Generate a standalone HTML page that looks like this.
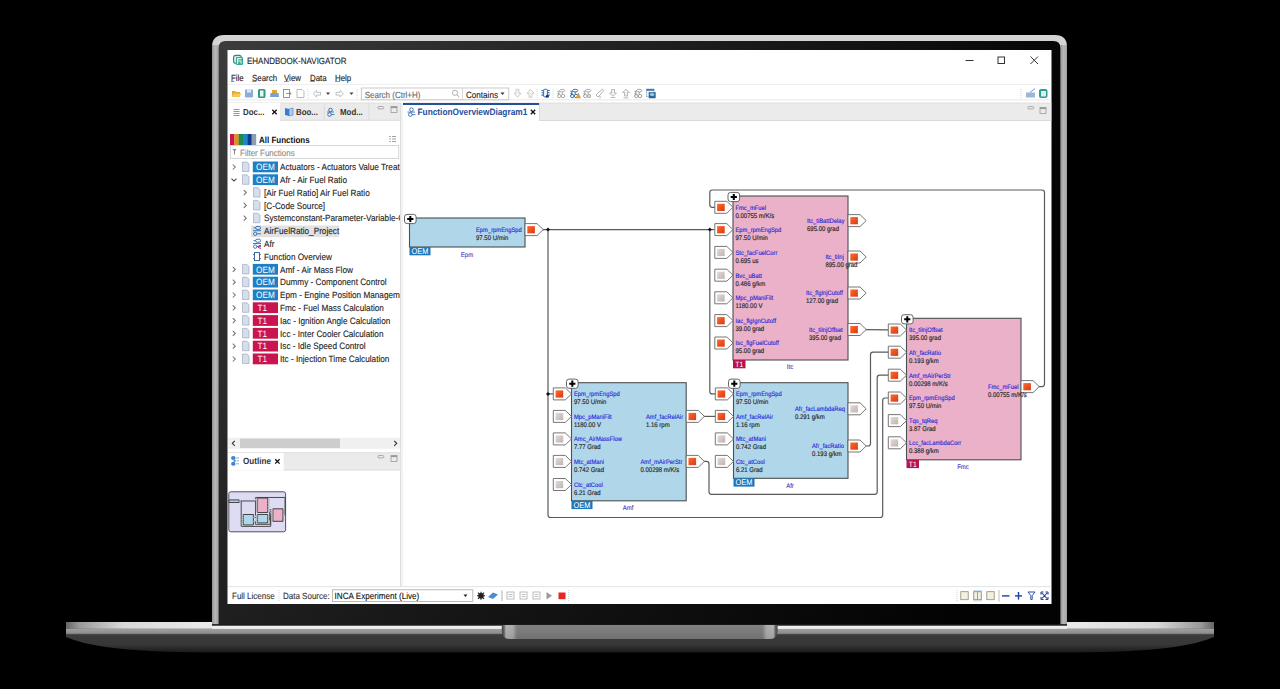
<!DOCTYPE html><html><head><meta charset="utf-8"><title>EHANDBOOK-NAVIGATOR</title><style>html,body{margin:0;padding:0;background:#000;width:1280px;height:689px;overflow:hidden}svg{display:block}text{font-family:"Liberation Sans",sans-serif}</style></head><body>
<svg width="1280" height="689" viewBox="0 0 1280 689" text-rendering="geometricPrecision">
<rect x="0.00" y="0.00" width="1280.00" height="689.00" fill="#000" />
<defs>
<linearGradient id="bez" x1="0" y1="0" x2="1" y2="0.15">
 <stop offset="0" stop-color="#3c3c3c"/><stop offset="0.45" stop-color="#222"/><stop offset="1" stop-color="#050505"/>
</linearGradient>
<linearGradient id="silL" x1="0" y1="0" x2="1" y2="0">
 <stop offset="0" stop-color="#959595"/><stop offset="0.5" stop-color="#b8b8b8"/><stop offset="1" stop-color="#a0a0a0"/>
</linearGradient>
<linearGradient id="silT" x1="0" y1="0" x2="0" y2="1">
 <stop offset="0" stop-color="#d4d4d4"/><stop offset="0.5" stop-color="#bebebe"/><stop offset="1" stop-color="#d8d8d8"/>
</linearGradient>
<linearGradient id="baseTop" x1="0" y1="0" x2="1" y2="0">
 <stop offset="0" stop-color="#666"/><stop offset="0.012" stop-color="#9a9a9a"/><stop offset="0.05" stop-color="#d8d8d8"/><stop offset="0.12" stop-color="#e8e8e8"/><stop offset="0.88" stop-color="#e8e8e8"/><stop offset="0.95" stop-color="#d8d8d8"/><stop offset="0.988" stop-color="#9a9a9a"/><stop offset="1" stop-color="#666"/>
</linearGradient>
<linearGradient id="baseMid" x1="0" y1="0" x2="0" y2="1">
 <stop offset="0" stop-color="#a0a0a0"/><stop offset="1" stop-color="#8a8a8a"/>
</linearGradient>
<linearGradient id="baseBot" x1="0" y1="0" x2="0" y2="1">
 <stop offset="0" stop-color="#444"/><stop offset="0.75" stop-color="#363636"/><stop offset="1" stop-color="#1a1a1a"/>
</linearGradient>
<linearGradient id="notch" x1="0" y1="0" x2="0" y2="1">
 <stop offset="0" stop-color="#8a8a8a"/><stop offset="0.5" stop-color="#7a7a7a"/><stop offset="1" stop-color="#5a5a5a"/>
</linearGradient>
<linearGradient id="bezV" x1="0" y1="0" x2="0" y2="1">
 <stop offset="0" stop-color="#000" stop-opacity="0"/><stop offset="1" stop-color="#000" stop-opacity="0.4"/>
</linearGradient>
<linearGradient id="notchH" x1="0" y1="0" x2="1" y2="0">
 <stop offset="0" stop-color="#2a2a2a"/><stop offset="0.008" stop-color="#555"/><stop offset="0.015" stop-color="#c8c8c8"/><stop offset="0.04" stop-color="#bdbdbd"/><stop offset="0.055" stop-color="#7c7c7c"/>
 <stop offset="0.945" stop-color="#7c7c7c"/><stop offset="0.96" stop-color="#bdbdbd"/><stop offset="0.985" stop-color="#c8c8c8"/><stop offset="0.992" stop-color="#555"/><stop offset="1" stop-color="#2a2a2a"/>
</linearGradient>
<linearGradient id="og" x1="0" y1="0" x2="1" y2="1">
 <stop offset="0" stop-color="#ff6a30"/><stop offset="1" stop-color="#d83a10"/>
</linearGradient>
<linearGradient id="gg" x1="0" y1="0" x2="1" y2="1">
 <stop offset="0" stop-color="#e2dbd8"/><stop offset="1" stop-color="#bfb3ae"/>
</linearGradient>
<clipPath id="treeclip"><rect x="228" y="120" width="172" height="318"/></clipPath>
<clipPath id="screenclip"><rect x="227.5" y="50" width="824" height="554"/></clipPath>
</defs>
<path d="M66,622 L1214,622 L1214,637 C1190,647 1150,652.5 1060,652.5 L220,652.5 C130,652.5 90,647 66,637 Z" fill="url(#baseBot)"/>
<rect x="66.00" y="622.00" width="1148.00" height="6.80" fill="url(#baseTop)" />
<rect x="66.00" y="628.80" width="1148.00" height="5.10" fill="url(#baseMid)" />
<rect x="66.00" y="633.90" width="1148.00" height="0.70" fill="#5a5a5a" opacity="0.6"/>
<path d="M212,624.4 L212,47 Q212,35 224,35 L1055,35 Q1067,35 1067,47 L1067,624.4 Z" fill="url(#silT)"/>
<rect x="212.00" y="45.00" width="6.60" height="579.40" fill="url(#silL)" />
<rect x="1060.40" y="45.00" width="6.60" height="579.40" fill="url(#silL)" />
<path d="M218.6,624.4 L218.6,48 Q218.6,41 225.6,41 L1053.4,41 Q1060.4,41 1060.4,48 L1060.4,624.4 Z" fill="url(#bez)"/>
<rect x="218.60" y="41.00" width="841.80" height="583.40" fill="url(#bezV)" />
<rect x="212.00" y="624.20" width="855.00" height="1.60" fill="#050505" />
<rect x="212.00" y="625.80" width="855.00" height="3.00" fill="#eeeeee" />
<path d="M501.8,625 L777.5,625 L777.5,631 Q777.5,639 769.5,639 L509.8,639 Q501.8,639 501.8,631 Z" fill="url(#notchH)"/>
<path d="M501.8,625 L777.5,625 L777.5,631 Q777.5,639 769.5,639 L509.8,639 Q501.8,639 501.8,631 Z" fill="url(#notch)" opacity="0.35"/>
<rect x="227.50" y="50.00" width="824.00" height="554.00" fill="#ffffff" />
<g clip-path="url(#screenclip)">
<rect x="233.6" y="55.4" width="7.6" height="7.8" rx="2" fill="#cdeee6" stroke="#2a8a78" stroke-width="1.1"/>
<rect x="236" y="57" width="7" height="8" rx="0.8" fill="#3aa890"/><path d="M237.6,64 L237.6,58.6 L241.6,58.6 M237.6,61 L241,61 L241,63.5" stroke="#e4f6f2" stroke-width="1.1" fill="none"/>
<text x="247.00" y="63.71" font-size="8.96" fill="#222" stroke="#222" stroke-width="0.12" stroke-linejoin="round" font-weight="normal" text-anchor="start" textLength="99.57" lengthAdjust="spacingAndGlyphs" >EHANDBOOK-NAVIGATOR</text>
<rect x="965.50" y="60.00" width="8.00" height="1.00" fill="#333" />
<rect x="998" y="57" width="6.5" height="6.5" fill="none" stroke="#333" stroke-width="1"/>
<path d="M1030.5,56.5 L1038,64 M1038,56.5 L1030.5,64" stroke="#333" stroke-width="1"/>
<text x="231.00" y="81.17" font-size="8.85" fill="#222" stroke="#222" stroke-width="0.12" stroke-linejoin="round" font-weight="normal" text-anchor="start" textLength="12.73" lengthAdjust="spacingAndGlyphs" >File</text>
<text x="252.00" y="81.17" font-size="8.85" fill="#222" stroke="#222" stroke-width="0.12" stroke-linejoin="round" font-weight="normal" text-anchor="start" textLength="25.03" lengthAdjust="spacingAndGlyphs" >Search</text>
<text x="284.00" y="81.17" font-size="8.85" fill="#222" stroke="#222" stroke-width="0.12" stroke-linejoin="round" font-weight="normal" text-anchor="start" textLength="16.98" lengthAdjust="spacingAndGlyphs" >View</text>
<text x="310.00" y="81.17" font-size="8.85" fill="#222" stroke="#222" stroke-width="0.12" stroke-linejoin="round" font-weight="normal" text-anchor="start" textLength="16.69" lengthAdjust="spacingAndGlyphs" >Data</text>
<text x="335.00" y="81.17" font-size="8.85" fill="#222" stroke="#222" stroke-width="0.12" stroke-linejoin="round" font-weight="normal" text-anchor="start" textLength="16.25" lengthAdjust="spacingAndGlyphs" >Help</text>
<rect x="231.00" y="81.40" width="3.50" height="0.60" fill="#555" />
<rect x="252.00" y="81.40" width="4.50" height="0.60" fill="#555" />
<rect x="284.00" y="81.40" width="5.00" height="0.60" fill="#555" />
<rect x="310.00" y="81.40" width="5.00" height="0.60" fill="#555" />
<rect x="335.00" y="81.40" width="5.00" height="0.60" fill="#555" />
<rect x="228.00" y="84.00" width="823.50" height="0.80" fill="#ececec" />
<rect x="228.00" y="99.50" width="823.50" height="0.80" fill="#e2e2e2" />
<path d="M232,91 L235,91 L236,92 L240,92 L240,97 L232,97 Z" fill="#e0a830"/><path d="M233,93.5 L241.5,93.5 L239.5,97 L232,97 Z" fill="#f5c85a"/>
<rect x="245" y="89.5" width="8" height="8" fill="#8aaed8" rx="1"/><rect x="247" y="89.5" width="4" height="3" fill="#dfe9f5"/>
<rect x="258" y="89" width="7.5" height="9" fill="#2f9e80" rx="1.5"/><rect x="260" y="90.5" width="3.5" height="6" fill="#e8f5f0"/>
<path d="M270.5,93 L278.5,93 L279,97 L270,97 Z" fill="#7aa0d8"/><rect x="272" y="90" width="5" height="3" fill="#e0a830"/>
<rect x="283.5" y="89.5" width="6" height="8" fill="none" stroke="#888" stroke-width="0.9"/><path d="M286,93.5 L291,93.5 M289.5,92 L291,93.5 L289.5,95" stroke="#888" stroke-width="0.9" fill="none"/>
<path d="M297,89.5 L302,89.5 L304,91.5 L304,97.5 L297,97.5 Z" fill="none" stroke="#aaa" stroke-width="0.8"/>
<path d="M308,89 L308,98" stroke="#ccc" stroke-width="0.8" stroke-dasharray="1,1"/>
<path d="M313,93.7 L316.5,90.5 L316.5,92.3 L320.5,92.3 L320.5,95.1 L316.5,95.1 L316.5,97 Z" fill="none" stroke="#bbb" stroke-width="0.9"/>
<path d="M326,92.5 L330,92.5 L328,95 Z" fill="#444"/>
<path d="M343.5,93.7 L340,90.5 L340,92.3 L336,92.3 L336,95.1 L340,95.1 L340,97 Z" fill="none" stroke="#bbb" stroke-width="0.9"/>
<path d="M349.5,92.5 L353.5,92.5 L351.5,95 Z" fill="#444"/>
<path d="M357,89 L357,98" stroke="#ccc" stroke-width="0.8" stroke-dasharray="1,1"/>
<rect x="361.3" y="88" width="147.5" height="11.8" fill="#fff" stroke="#bdbdbd" stroke-width="0.8"/>
<rect x="462.20" y="88.30" width="0.70" height="11.30" fill="#c8c8c8" />
<text x="364.70" y="98.01" font-size="8.96" fill="#666" stroke="#666" stroke-width="0.12" stroke-linejoin="round" font-weight="normal" text-anchor="start" textLength="55.79" lengthAdjust="spacingAndGlyphs" >Search (Ctrl+H)</text>
<circle cx="455" cy="92.8" r="2.6" fill="none" stroke="#aaa" stroke-width="0.9"/><path d="M457,94.8 L459.5,97.3" stroke="#aaa" stroke-width="1"/>
<text x="466.00" y="98.05" font-size="9.07" fill="#222" stroke="#222" stroke-width="0.12" stroke-linejoin="round" font-weight="normal" text-anchor="start" textLength="31.97" lengthAdjust="spacingAndGlyphs" >Contains</text>
<path d="M500.5,92.5 L504.5,92.5 L502.5,95 Z" fill="#333"/>
<path d="M516,89.3 L519,89.3 L519,93.3 L521,93.3 L517.5,97.3 L514,93.3 L516,93.3 Z" fill="#f6f6f2" stroke="#c4c4c4" stroke-width="0.8"/>
<path d="M529,97.3 L532,97.3 L532,93.3 L534,93.3 L530.5,89.3 L527,93.3 L529,93.3 Z" fill="#f6f6f2" stroke="#c4c4c4" stroke-width="0.8"/>
<path d="M537,89 L537,98" stroke="#ccc" stroke-width="0.8" stroke-dasharray="1,1"/>
<path d="M541.5,90.5 L543.5,90.5 M541.5,92.8 L543.5,92.8 M541.5,95.1 L543.5,95.1 M547.3,90.5 L549.7,90.5 M547.3,92.8 L549.7,92.8 M547.3,95.1 L549.7,95.1" stroke="#2a64a8" stroke-width="1.1"/>
<rect x="543.6" y="89.3" width="3.8" height="7.6" rx="1" fill="#f4f8fc" stroke="#2a5a9a" stroke-width="0.9"/><circle cx="547.3" cy="96.3" r="1.5" fill="#0d3a80"/>
<path d="M553,89 L553,98" stroke="#ccc" stroke-width="0.8" stroke-dasharray="1,1"/>
<ellipse cx="562.2" cy="90.6" rx="2.7" ry="1.3" fill="none" stroke="#a0a0a0" stroke-width="0.9"/>
<path d="M557.4,91.3 L559.7,91.3 M557.4,93.4 L559.4,93.4 M558.8,91.3 L558.8,95.5" stroke="#a0a0a0" stroke-width="0.9" fill="none"/>
<circle cx="559.2" cy="96" r="1.7" fill="none" stroke="#a0a0a0" stroke-width="0.9"/><circle cx="563.0" cy="96" r="1.7" fill="none" stroke="#a0a0a0" stroke-width="0.9"/><path d="M562.2,92 L562.2,94.2" stroke="#a0a0a0" stroke-width="0.9"/>
<ellipse cx="575.2" cy="90.6" rx="2.7" ry="1.3" fill="none" stroke="#2a64a8" stroke-width="0.9"/>
<path d="M570.4,91.3 L572.7,91.3 M570.4,93.4 L572.4,93.4 M571.8,91.3 L571.8,95.5" stroke="#2a64a8" stroke-width="0.9" fill="none"/>
<circle cx="572.2" cy="96" r="1.7" fill="none" stroke="#2a64a8" stroke-width="0.9"/><circle cx="576.0" cy="96" r="1.7" fill="none" stroke="#2a64a8" stroke-width="0.9"/><path d="M575.2,92 L575.2,94.2" stroke="#2a64a8" stroke-width="0.9"/>
<path d="M576,98 L578.3,93 L580.6,98 Z" fill="#f0a020" stroke="#d88a10" stroke-width="0.5"/>
<ellipse cx="588.2" cy="90.6" rx="2.7" ry="1.3" fill="none" stroke="#a0a0a0" stroke-width="0.9"/>
<path d="M583.4,91.3 L585.7,91.3 M583.4,93.4 L585.4,93.4 M584.8,91.3 L584.8,95.5" stroke="#a0a0a0" stroke-width="0.9" fill="none"/>
<circle cx="585.2" cy="96" r="1.7" fill="none" stroke="#a0a0a0" stroke-width="0.9"/><circle cx="589.0" cy="96" r="1.7" fill="none" stroke="#a0a0a0" stroke-width="0.9"/><path d="M588.2,92 L588.2,94.2" stroke="#a0a0a0" stroke-width="0.9"/>
<circle cx="588.8" cy="96" r="2" fill="#bbb" opacity="0.6"/>
<path d="M596,95 L599,92 L602.5,89.2 L603.8,90.5 L601,94 L598,97 Z" fill="none" stroke="#aaa" stroke-width="0.9"/><path d="M600,96 L600,98.3" stroke="#aaa" stroke-width="0.9"/>
<path d="M611.5,89.5 L614.5,89.5 L614.5,93 L616.5,93 L613,96.2 L609.5,93 L611.5,93 Z" fill="#f4f2ea" stroke="#aaa" stroke-width="0.8"/><path d="M610.5,97.5 L615.5,97.5" stroke="#aaa" stroke-width="0.8"/>
<path d="M624.5,96 L627.5,96 L627.5,92.5 L629.5,92.5 L626,89.3 L622.5,92.5 L624.5,92.5 Z" fill="#f4f2ea" stroke="#aaa" stroke-width="0.8"/><path d="M623.5,97.8 L628.5,97.8" stroke="#aaa" stroke-width="0.8"/>
<ellipse cx="639.2" cy="90.6" rx="2.7" ry="1.3" fill="none" stroke="#959595" stroke-width="0.9"/>
<path d="M634.4,91.3 L636.7,91.3 M634.4,93.4 L636.4,93.4 M635.8,91.3 L635.8,95.5" stroke="#959595" stroke-width="0.9" fill="none"/>
<circle cx="636.2" cy="96" r="1.7" fill="none" stroke="#959595" stroke-width="0.9"/><circle cx="640.0" cy="96" r="1.7" fill="none" stroke="#959595" stroke-width="0.9"/><path d="M639.2,92 L639.2,94.2" stroke="#959595" stroke-width="0.9"/>
<rect x="646.3" y="89" width="7.8" height="7.5" fill="#eef2f4" stroke="#8aa0b0" stroke-width="0.6"/><rect x="646.3" y="89" width="7.8" height="1.8" fill="#3a78c8"/>
<rect x="649" y="92.5" width="6.3" height="5.5" fill="#2a6a9a" stroke="#3a5a7a" stroke-width="0.5"/><ellipse cx="652.1" cy="94.6" rx="2.2" ry="1.5" fill="#8fd0f0"/>
<path d="M1021,89 L1021,98" stroke="#ccc" stroke-width="0.8" stroke-dasharray="1,1"/>
<rect x="1026" y="92.5" width="9" height="5" fill="#9ab8d8"/><path d="M1030,92.5 L1035,88.5" stroke="#6a8ab0" stroke-width="0.9"/>
<rect x="1039" y="89" width="8.5" height="9" rx="2" fill="#2f9e90"/><rect x="1041" y="91" width="5" height="5.5" fill="#d8f0ec"/>
<rect x="228.00" y="103.00" width="172.50" height="17.50" fill="#ebebeb" />
<rect x="228.00" y="102.60" width="172.50" height="0.80" fill="#dadada" />
<rect x="228.00" y="119.80" width="172.50" height="0.80" fill="#d6d6d6" />
<rect x="228.00" y="103.00" width="52.00" height="18.00" fill="#ffffff" />
<rect x="323.80" y="103.50" width="0.80" height="16.50" fill="#d8d8d8" />
<rect x="368.60" y="103.50" width="0.80" height="16.50" fill="#d8d8d8" />
<rect x="400.20" y="103.00" width="0.80" height="483.50" fill="#d8d8d8" />
<rect x="401.00" y="103.00" width="2.00" height="483.50" fill="#f2f2f2" />
<path d="M233.5,109.5 L239.5,109.5 M233.5,111.5 L239.5,111.5 M233.5,113.5 L239.5,113.5 M233.5,115.5 L239.5,115.5" stroke="#6a7a90" stroke-width="0.8"/>
<text x="243.00" y="115.17" font-size="8.85" fill="#333" font-weight="bold" text-anchor="start" textLength="21.51" lengthAdjust="spacingAndGlyphs" >Doc...</text>
<path d="M272.3,109.8 L276.7,114.2 M276.7,109.8 L272.3,114.2" stroke="#111" stroke-width="1.3"/>
<path d="M285,108 L289,109 L289,116 L285,115 Z" fill="#3a7ad0"/><path d="M289,109 L293,108 L293,115 L289,116 Z" fill="#aecdf0" stroke="#3a7ad0" stroke-width="0.6"/>
<text x="296.00" y="115.17" font-size="8.85" fill="#333" font-weight="bold" text-anchor="start" textLength="21.94" lengthAdjust="spacingAndGlyphs" >Boo...</text>
<circle cx="330.5" cy="110" r="1.8" fill="none" stroke="#2a6ab0" stroke-width="0.9"/><circle cx="329.5" cy="114.5" r="1.8" fill="none" stroke="#2a6ab0" stroke-width="0.9"/><path d="M327,112 L334,112 M331,114.5 L334.5,114.5" stroke="#2a6ab0" stroke-width="0.8"/>
<text x="340.00" y="115.17" font-size="8.85" fill="#333" font-weight="bold" text-anchor="start" textLength="22.82" lengthAdjust="spacingAndGlyphs" >Mod...</text>
<rect x="377.8" y="106.5" width="6" height="2.4" rx="1.2" fill="none" stroke="#999" stroke-width="0.8"/>
<rect x="391" y="106.5" width="6" height="6" fill="none" stroke="#999" stroke-width="0.8"/><rect x="391" y="106.5" width="6" height="1.6" fill="#999"/>
<rect x="230.00" y="134.00" width="4.53" height="11.00" fill="#c8174f" />
<rect x="234.33" y="134.00" width="4.53" height="11.00" fill="#e0901c" />
<rect x="238.67" y="134.00" width="4.53" height="11.00" fill="#1f8a4c" />
<rect x="243.00" y="134.00" width="4.53" height="11.00" fill="#1d86c8" />
<rect x="247.33" y="134.00" width="4.53" height="11.00" fill="#0d3c8a" />
<rect x="251.67" y="134.00" width="4.53" height="11.00" fill="#8e9bb0" />
<text x="259.00" y="143.21" font-size="8.96" fill="#111" font-weight="bold" text-anchor="start" textLength="50.66" lengthAdjust="spacingAndGlyphs" >All Functions</text>
<path d="M389.5,136.5 L390.5,136.5 M389.5,139 L390.5,139 M389.5,141.5 L390.5,141.5" stroke="#2a6ab0" stroke-width="1"/><path d="M392,136.5 L396,136.5 M392,139 L396,139 M392,141.5 L396,141.5" stroke="#888" stroke-width="0.8"/>
<rect x="230.3" y="145.7" width="168.5" height="12.6" fill="#fff" stroke="#c4c4c4" stroke-width="0.7"/>
<path d="M232.5,149 L236.5,149 L235,151 L235,154.5 L234,154.5 L234,151 Z" fill="#888"/>
<text x="240.00" y="155.81" font-size="8.96" fill="#8a8a8a" stroke="#8a8a8a" stroke-width="0.12" stroke-linejoin="round" font-weight="normal" text-anchor="start" textLength="54.68" lengthAdjust="spacingAndGlyphs" >Filter Functions</text>
<g clip-path="url(#treeclip)">
<path d="M232.8,164.5 L235.3,167.0 L232.8,169.5" stroke="#707070" stroke-width="1.05" fill="none"/>
<path d="M242.5,162.0 L247,162.0 L249,164.0 L249,171.5 L242.5,171.5 Z" fill="#d6deec" stroke="#9eaac2" stroke-width="0.7"/>
<rect x="252.80" y="161.50" width="25.20" height="10.80" fill="#1f7fc4" />
<text x="265.40" y="170.29" font-size="9.18" fill="#fff" font-weight="normal" text-anchor="middle" textLength="18.68" lengthAdjust="spacingAndGlyphs" >OEM</text>
<text x="280.00" y="170.29" font-size="9.18" fill="#222" stroke="#222" stroke-width="0.12" stroke-linejoin="round" font-weight="normal" text-anchor="start" textLength="119.72" lengthAdjust="spacingAndGlyphs" >Actuators - Actuators Value Treat</text>
<path d="M231.5,178.60000000000002 L234,181.10000000000002 L236.5,178.60000000000002" stroke="#444" stroke-width="1.05" fill="none"/>
<path d="M242.5,174.8 L247,174.8 L249,176.8 L249,184.3 L242.5,184.3 Z" fill="#d6deec" stroke="#9eaac2" stroke-width="0.7"/>
<rect x="252.80" y="174.30" width="25.20" height="10.80" fill="#1f7fc4" />
<text x="265.40" y="183.09" font-size="9.18" fill="#fff" font-weight="normal" text-anchor="middle" textLength="18.68" lengthAdjust="spacingAndGlyphs" >OEM</text>
<text x="280.00" y="183.09" font-size="9.18" fill="#222" stroke="#222" stroke-width="0.12" stroke-linejoin="round" font-weight="normal" text-anchor="start" textLength="66.99" lengthAdjust="spacingAndGlyphs" >Afr - Air Fuel Ratio</text>
<path d="M243.8,190.1 L246.3,192.6 L243.8,195.1" stroke="#707070" stroke-width="1.05" fill="none"/>
<path d="M253.5,187.6 L258,187.6 L260,189.6 L260,197.1 L253.5,197.1 Z" fill="#d6deec" stroke="#9eaac2" stroke-width="0.7"/>
<text x="264.00" y="195.89" font-size="9.18" fill="#222" stroke="#222" stroke-width="0.12" stroke-linejoin="round" font-weight="normal" text-anchor="start" textLength="105.73" lengthAdjust="spacingAndGlyphs" >[Air Fuel Ratio] Air Fuel Ratio</text>
<path d="M243.8,202.9 L246.3,205.4 L243.8,207.9" stroke="#707070" stroke-width="1.05" fill="none"/>
<path d="M253.5,200.4 L258,200.4 L260,202.4 L260,209.9 L253.5,209.9 Z" fill="#d6deec" stroke="#9eaac2" stroke-width="0.7"/>
<text x="264.00" y="208.69" font-size="9.18" fill="#222" stroke="#222" stroke-width="0.12" stroke-linejoin="round" font-weight="normal" text-anchor="start" textLength="61.07" lengthAdjust="spacingAndGlyphs" >[C-Code Source]</text>
<path d="M243.8,215.7 L246.3,218.2 L243.8,220.7" stroke="#707070" stroke-width="1.05" fill="none"/>
<path d="M253.5,213.2 L258,213.2 L260,215.2 L260,222.7 L253.5,222.7 Z" fill="#d6deec" stroke="#9eaac2" stroke-width="0.7"/>
<text x="264.00" y="221.49" font-size="9.18" fill="#222" stroke="#222" stroke-width="0.12" stroke-linejoin="round" font-weight="normal" text-anchor="start" textLength="140.21" lengthAdjust="spacingAndGlyphs" >Systemconstant-Parameter-Variable-C</text>
<rect x="251.00" y="225.50" width="88.00" height="11.70" fill="#e2e2e2" />
<rect x="255.6" y="226.4" width="5" height="3" rx="1.5" fill="none" stroke="#2a6ab0" stroke-width="0.9"/><circle cx="255.2" cy="233.8" r="1.7" fill="none" stroke="#2a6ab0" stroke-width="0.9"/><path d="M253,230.7 L261,230.7 M253.4,227.9 L255.6,227.9 M256.9,233.8 L261,233.8" stroke="#2a6ab0" stroke-width="0.9"/>
<text x="264.00" y="234.29" font-size="9.18" fill="#222" stroke="#222" stroke-width="0.12" stroke-linejoin="round" font-weight="normal" text-anchor="start" textLength="75.20" lengthAdjust="spacingAndGlyphs" >AirFuelRatio_Project</text>
<rect x="255.6" y="239.20000000000002" width="5" height="3" rx="1.5" fill="none" stroke="#2a6ab0" stroke-width="0.9"/><circle cx="255.2" cy="246.60000000000002" r="1.7" fill="none" stroke="#2a6ab0" stroke-width="0.9"/><path d="M253,243.5 L261,243.5 M253.4,240.70000000000002 L255.6,240.70000000000002 M256.9,246.60000000000002 L261,246.60000000000002" stroke="#2a6ab0" stroke-width="0.9"/>
<path d="M261,245.3 Q258,245.3 258,246.8 Q258,248.3 261,248.3" stroke="#d02040" stroke-width="1" fill="none"/>
<text x="264.00" y="247.09" font-size="9.18" fill="#222" stroke="#222" stroke-width="0.12" stroke-linejoin="round" font-weight="normal" text-anchor="start" textLength="10.48" lengthAdjust="spacingAndGlyphs" >Afr</text>
<rect x="254.5" y="252.60000000000002" width="5" height="8" fill="none" stroke="#2a5a90" stroke-width="0.9"/><path d="M253,254.60000000000002 L254.5,254.60000000000002 M253,258.6 L254.5,258.6 M259.5,254.60000000000002 L261,254.60000000000002 M259.5,258.6 L261,258.6" stroke="#2a5a90" stroke-width="0.8"/>
<text x="264.00" y="259.89" font-size="9.18" fill="#222" stroke="#222" stroke-width="0.12" stroke-linejoin="round" font-weight="normal" text-anchor="start" textLength="67.90" lengthAdjust="spacingAndGlyphs" >Function Overview</text>
<path d="M232.8,266.9 L235.3,269.4 L232.8,271.9" stroke="#707070" stroke-width="1.05" fill="none"/>
<path d="M242.5,264.4 L247,264.4 L249,266.4 L249,273.9 L242.5,273.9 Z" fill="#d6deec" stroke="#9eaac2" stroke-width="0.7"/>
<rect x="252.80" y="263.90" width="25.20" height="10.80" fill="#1f7fc4" />
<text x="265.40" y="272.69" font-size="9.18" fill="#fff" font-weight="normal" text-anchor="middle" textLength="18.68" lengthAdjust="spacingAndGlyphs" >OEM</text>
<text x="280.00" y="272.69" font-size="9.18" fill="#222" stroke="#222" stroke-width="0.12" stroke-linejoin="round" font-weight="normal" text-anchor="start" textLength="72.90" lengthAdjust="spacingAndGlyphs" >Amf - Air Mass Flow</text>
<path d="M232.8,279.7 L235.3,282.2 L232.8,284.7" stroke="#707070" stroke-width="1.05" fill="none"/>
<path d="M242.5,277.2 L247,277.2 L249,279.2 L249,286.7 L242.5,286.7 Z" fill="#d6deec" stroke="#9eaac2" stroke-width="0.7"/>
<rect x="252.80" y="276.70" width="25.20" height="10.80" fill="#1f7fc4" />
<text x="265.40" y="285.49" font-size="9.18" fill="#fff" font-weight="normal" text-anchor="middle" textLength="18.68" lengthAdjust="spacingAndGlyphs" >OEM</text>
<text x="280.00" y="285.49" font-size="9.18" fill="#222" stroke="#222" stroke-width="0.12" stroke-linejoin="round" font-weight="normal" text-anchor="start" textLength="106.64" lengthAdjust="spacingAndGlyphs" >Dummy - Component Control</text>
<path d="M232.8,292.5 L235.3,295.0 L232.8,297.5" stroke="#707070" stroke-width="1.05" fill="none"/>
<path d="M242.5,290.0 L247,290.0 L249,292.0 L249,299.5 L242.5,299.5 Z" fill="#d6deec" stroke="#9eaac2" stroke-width="0.7"/>
<rect x="252.80" y="289.50" width="25.20" height="10.80" fill="#1f7fc4" />
<text x="265.40" y="298.29" font-size="9.18" fill="#fff" font-weight="normal" text-anchor="middle" textLength="18.68" lengthAdjust="spacingAndGlyphs" >OEM</text>
<text x="280.00" y="298.29" font-size="9.18" fill="#222" stroke="#222" stroke-width="0.12" stroke-linejoin="round" font-weight="normal" text-anchor="start" textLength="131.27" lengthAdjust="spacingAndGlyphs" >Epm - Engine Position Management</text>
<path d="M232.8,305.3 L235.3,307.8 L232.8,310.3" stroke="#707070" stroke-width="1.05" fill="none"/>
<path d="M242.5,302.8 L247,302.8 L249,304.8 L249,312.3 L242.5,312.3 Z" fill="#d6deec" stroke="#9eaac2" stroke-width="0.7"/>
<rect x="252.80" y="302.30" width="25.20" height="10.80" fill="#c8144f" />
<text x="257.50" y="311.09" font-size="9.18" fill="#fff" font-weight="normal" text-anchor="start" textLength="9.57" lengthAdjust="spacingAndGlyphs" >T1</text>
<text x="280.00" y="311.09" font-size="9.18" fill="#222" stroke="#222" stroke-width="0.12" stroke-linejoin="round" font-weight="normal" text-anchor="start" textLength="103.89" lengthAdjust="spacingAndGlyphs" >Fmc - Fuel Mass Calculation</text>
<path d="M232.8,318.1 L235.3,320.6 L232.8,323.1" stroke="#707070" stroke-width="1.05" fill="none"/>
<path d="M242.5,315.6 L247,315.6 L249,317.6 L249,325.1 L242.5,325.1 Z" fill="#d6deec" stroke="#9eaac2" stroke-width="0.7"/>
<rect x="252.80" y="315.10" width="25.20" height="10.80" fill="#c8144f" />
<text x="257.50" y="323.89" font-size="9.18" fill="#fff" font-weight="normal" text-anchor="start" textLength="9.57" lengthAdjust="spacingAndGlyphs" >T1</text>
<text x="280.00" y="323.89" font-size="9.18" fill="#222" stroke="#222" stroke-width="0.12" stroke-linejoin="round" font-weight="normal" text-anchor="start" textLength="110.31" lengthAdjust="spacingAndGlyphs" >Iac - Ignition Angle Calculation</text>
<path d="M232.8,330.9 L235.3,333.4 L232.8,335.9" stroke="#707070" stroke-width="1.05" fill="none"/>
<path d="M242.5,328.4 L247,328.4 L249,330.4 L249,337.9 L242.5,337.9 Z" fill="#d6deec" stroke="#9eaac2" stroke-width="0.7"/>
<rect x="252.80" y="327.90" width="25.20" height="10.80" fill="#c8144f" />
<text x="257.50" y="336.69" font-size="9.18" fill="#fff" font-weight="normal" text-anchor="start" textLength="9.57" lengthAdjust="spacingAndGlyphs" >T1</text>
<text x="280.00" y="336.69" font-size="9.18" fill="#222" stroke="#222" stroke-width="0.12" stroke-linejoin="round" font-weight="normal" text-anchor="start" textLength="103.45" lengthAdjust="spacingAndGlyphs" >Icc - Inter Cooler Calculation</text>
<path d="M232.8,343.70000000000005 L235.3,346.20000000000005 L232.8,348.70000000000005" stroke="#707070" stroke-width="1.05" fill="none"/>
<path d="M242.5,341.20000000000005 L247,341.20000000000005 L249,343.20000000000005 L249,350.70000000000005 L242.5,350.70000000000005 Z" fill="#d6deec" stroke="#9eaac2" stroke-width="0.7"/>
<rect x="252.80" y="340.70" width="25.20" height="10.80" fill="#c8144f" />
<text x="257.50" y="349.49" font-size="9.18" fill="#fff" font-weight="normal" text-anchor="start" textLength="9.57" lengthAdjust="spacingAndGlyphs" >T1</text>
<text x="280.00" y="349.49" font-size="9.18" fill="#222" stroke="#222" stroke-width="0.12" stroke-linejoin="round" font-weight="normal" text-anchor="start" textLength="85.69" lengthAdjust="spacingAndGlyphs" >Isc - Idle Speed Control</text>
<path d="M232.8,356.5 L235.3,359.0 L232.8,361.5" stroke="#707070" stroke-width="1.05" fill="none"/>
<path d="M242.5,354.0 L247,354.0 L249,356.0 L249,363.5 L242.5,363.5 Z" fill="#d6deec" stroke="#9eaac2" stroke-width="0.7"/>
<rect x="252.80" y="353.50" width="25.20" height="10.80" fill="#c8144f" />
<text x="257.50" y="362.29" font-size="9.18" fill="#fff" font-weight="normal" text-anchor="start" textLength="9.57" lengthAdjust="spacingAndGlyphs" >T1</text>
<text x="280.00" y="362.29" font-size="9.18" fill="#222" stroke="#222" stroke-width="0.12" stroke-linejoin="round" font-weight="normal" text-anchor="start" textLength="109.38" lengthAdjust="spacingAndGlyphs" >Itc - Injection Time Calculation</text>
</g>
<rect x="228.00" y="437.80" width="172.00" height="11.00" fill="#f0f0f0" />
<rect x="240.00" y="438.60" width="100.00" height="9.40" fill="#cdcdcd" />
<path d="M234.8,440.8 L232.3,443.3 L234.8,445.8" stroke="#333" stroke-width="1.1" fill="none"/>
<path d="M394.2,440.8 L396.7,443.3 L394.2,445.8" stroke="#333" stroke-width="1.1" fill="none"/>
<rect x="228.00" y="452.60" width="172.20" height="17.60" fill="#ebebeb" />
<rect x="228.00" y="452.40" width="172.20" height="0.80" fill="#dadada" />
<rect x="228.00" y="469.60" width="172.20" height="0.80" fill="#d6d6d6" />
<rect x="228.00" y="453.00" width="55.70" height="17.60" fill="#ffffff" />
<rect x="231.6" y="456.5" width="3.4" height="3" rx="0.8" fill="#3a8ad8" stroke="#1a6ab8" stroke-width="0.5"/><rect x="231.6" y="462.3" width="3.4" height="3" rx="0.8" fill="#3a8ad8" stroke="#1a6ab8" stroke-width="0.5"/><rect x="233.6" y="459.8" width="2" height="2" fill="#4a8ac8"/>
<path d="M236,458 L239,458 M236.5,460.8 L239,460.8 M236,463.8 L239,463.8" stroke="#7aa0c8" stroke-width="0.8"/>
<text x="243.00" y="463.85" font-size="9.07" fill="#333" font-weight="bold" text-anchor="start" textLength="27.90" lengthAdjust="spacingAndGlyphs" >Outline</text>
<path d="M275.2,459.2 L279.6,463.6 M279.6,459.2 L275.2,463.6" stroke="#111" stroke-width="1.3"/>
<rect x="377.8" y="455.5" width="6" height="2.4" rx="1.2" fill="none" stroke="#999" stroke-width="0.8"/>
<rect x="391" y="455.5" width="6" height="6" fill="none" stroke="#999" stroke-width="0.8"/><rect x="391" y="455.5" width="6" height="1.6" fill="#999"/>
<rect x="228.8" y="491.8" width="56.8" height="40" rx="2" fill="#dddcf2" stroke="#505060" stroke-width="1"/>
<g transform="translate(192.8,480.7) scale(0.0883)">
<path d="M542,229.6 L714.5,229.6" fill="none" stroke="#3a3a3a" stroke-width="0.9" vector-effect="non-scaling-stroke"/>
<path d="M548,229.6 L548,515 Q548,517.5 550.5,517.5 L880,517.5 Q882.7,517.5 882.7,515 L882.7,400.5 Q882.7,398 885,398 L888.5,398" fill="none" stroke="#3a3a3a" stroke-width="0.9" vector-effect="non-scaling-stroke"/>
<path d="M548,393.9 L553.5,393.9" fill="none" stroke="#3a3a3a" stroke-width="0.9" vector-effect="non-scaling-stroke"/>
<path d="M709.8,229.6 L709.8,391.4 Q709.8,393.9 712.3,393.9 L715.5,393.9" fill="none" stroke="#3a3a3a" stroke-width="0.9" vector-effect="non-scaling-stroke"/>
<path d="M703,416.4 L715.5,416.4" fill="none" stroke="#3a3a3a" stroke-width="0.9" vector-effect="non-scaling-stroke"/>
<path d="M703,461.4 L706.5,461.4 Q709,461.4 709,464 L709,491.8 Q709,494.3 711.5,494.3 L874.7,494.3 Q877.2,494.3 877.2,491.8 L877.2,377.7 Q877.2,375.2 879.7,375.2 L888.5,375.2" fill="none" stroke="#3a3a3a" stroke-width="0.9" vector-effect="non-scaling-stroke"/>
<path d="M866,446 L868,446 Q870.5,446 870.5,443.5 L870.5,354.7 Q870.5,352.2 873,352.2 L888.5,352.2" fill="none" stroke="#3a3a3a" stroke-width="0.9" vector-effect="non-scaling-stroke"/>
<path d="M866,329.7 L888.5,329.8" fill="none" stroke="#3a3a3a" stroke-width="0.9" vector-effect="non-scaling-stroke"/>
<path d="M1039,386.6 L1042,386.6 Q1044.5,386.6 1044.5,384.1 L1044.5,192.5 Q1044.5,190 1042,190 L712.3,190 Q709.8,190 709.8,192.5 L709.8,204.8 Q709.8,207.3 712.3,207.3 L715,207.3" fill="none" stroke="#3a3a3a" stroke-width="0.9" vector-effect="non-scaling-stroke"/>
<rect x="409.5" y="218" width="115.5" height="29" fill="#b0d6ea" stroke="#333" stroke-width="0.9" vector-effect="non-scaling-stroke"/>
<rect x="525" y="223.6" width="18" height="12" fill="#fff" stroke="#777" stroke-width="0.4" vector-effect="non-scaling-stroke"/>
<rect x="733" y="196" width="115" height="164" fill="#eab1c8" stroke="#333" stroke-width="0.9" vector-effect="non-scaling-stroke"/>
<rect x="715" y="201.3" width="18" height="12" fill="#fff" stroke="#777" stroke-width="0.4" vector-effect="non-scaling-stroke"/>
<rect x="715" y="223.6" width="18" height="12" fill="#fff" stroke="#777" stroke-width="0.4" vector-effect="non-scaling-stroke"/>
<rect x="715" y="246.4" width="18" height="12" fill="#fff" stroke="#777" stroke-width="0.4" vector-effect="non-scaling-stroke"/>
<rect x="715" y="269.2" width="18" height="12" fill="#fff" stroke="#777" stroke-width="0.4" vector-effect="non-scaling-stroke"/>
<rect x="715" y="291.8" width="18" height="12" fill="#fff" stroke="#777" stroke-width="0.4" vector-effect="non-scaling-stroke"/>
<rect x="715" y="314.6" width="18" height="12" fill="#fff" stroke="#777" stroke-width="0.4" vector-effect="non-scaling-stroke"/>
<rect x="715" y="337" width="18" height="12" fill="#fff" stroke="#777" stroke-width="0.4" vector-effect="non-scaling-stroke"/>
<rect x="848" y="214.6" width="18" height="12" fill="#fff" stroke="#777" stroke-width="0.4" vector-effect="non-scaling-stroke"/>
<rect x="848" y="251" width="18" height="12" fill="#fff" stroke="#777" stroke-width="0.4" vector-effect="non-scaling-stroke"/>
<rect x="848" y="287" width="18" height="12" fill="#fff" stroke="#777" stroke-width="0.4" vector-effect="non-scaling-stroke"/>
<rect x="848" y="323.5" width="18" height="12" fill="#fff" stroke="#777" stroke-width="0.4" vector-effect="non-scaling-stroke"/>
<rect x="571.5" y="382.7" width="114.70000000000005" height="118.10000000000002" fill="#b0d6ea" stroke="#333" stroke-width="0.9" vector-effect="non-scaling-stroke"/>
<rect x="553.5" y="387.9" width="18" height="12" fill="#fff" stroke="#777" stroke-width="0.4" vector-effect="non-scaling-stroke"/>
<rect x="553.5" y="410.4" width="18" height="12" fill="#fff" stroke="#777" stroke-width="0.4" vector-effect="non-scaling-stroke"/>
<rect x="553.5" y="432.9" width="18" height="12" fill="#fff" stroke="#777" stroke-width="0.4" vector-effect="non-scaling-stroke"/>
<rect x="553.5" y="455.4" width="18" height="12" fill="#fff" stroke="#777" stroke-width="0.4" vector-effect="non-scaling-stroke"/>
<rect x="553.5" y="478.5" width="18" height="12" fill="#fff" stroke="#777" stroke-width="0.4" vector-effect="non-scaling-stroke"/>
<rect x="686.2" y="410.4" width="18" height="12" fill="#fff" stroke="#777" stroke-width="0.4" vector-effect="non-scaling-stroke"/>
<rect x="686.2" y="455.4" width="18" height="12" fill="#fff" stroke="#777" stroke-width="0.4" vector-effect="non-scaling-stroke"/>
<rect x="733.5" y="382.7" width="114.5" height="95.60000000000002" fill="#b0d6ea" stroke="#333" stroke-width="0.9" vector-effect="non-scaling-stroke"/>
<rect x="715.5" y="387.9" width="18" height="12" fill="#fff" stroke="#777" stroke-width="0.4" vector-effect="non-scaling-stroke"/>
<rect x="715.5" y="410.4" width="18" height="12" fill="#fff" stroke="#777" stroke-width="0.4" vector-effect="non-scaling-stroke"/>
<rect x="715.5" y="432.9" width="18" height="12" fill="#fff" stroke="#777" stroke-width="0.4" vector-effect="non-scaling-stroke"/>
<rect x="715.5" y="455.4" width="18" height="12" fill="#fff" stroke="#777" stroke-width="0.4" vector-effect="non-scaling-stroke"/>
<rect x="848" y="402.8" width="18" height="12" fill="#fff" stroke="#777" stroke-width="0.4" vector-effect="non-scaling-stroke"/>
<rect x="848" y="440" width="18" height="12" fill="#fff" stroke="#777" stroke-width="0.4" vector-effect="non-scaling-stroke"/>
<rect x="906.5" y="318.3" width="114.5" height="141.5" fill="#eab1c8" stroke="#333" stroke-width="0.9" vector-effect="non-scaling-stroke"/>
<rect x="888.5" y="324" width="18" height="12" fill="#fff" stroke="#777" stroke-width="0.4" vector-effect="non-scaling-stroke"/>
<rect x="888.5" y="346.2" width="18" height="12" fill="#fff" stroke="#777" stroke-width="0.4" vector-effect="non-scaling-stroke"/>
<rect x="888.5" y="369.2" width="18" height="12" fill="#fff" stroke="#777" stroke-width="0.4" vector-effect="non-scaling-stroke"/>
<rect x="888.5" y="392" width="18" height="12" fill="#fff" stroke="#777" stroke-width="0.4" vector-effect="non-scaling-stroke"/>
<rect x="888.5" y="414.6" width="18" height="12" fill="#fff" stroke="#777" stroke-width="0.4" vector-effect="non-scaling-stroke"/>
<rect x="888.5" y="436.8" width="18" height="12" fill="#fff" stroke="#777" stroke-width="0.4" vector-effect="non-scaling-stroke"/>
<rect x="1021" y="380.6" width="18" height="12" fill="#fff" stroke="#777" stroke-width="0.4" vector-effect="non-scaling-stroke"/>
</g>
<rect x="228.00" y="586.30" width="823.50" height="0.80" fill="#dcdcdc" />
<text x="232.00" y="599.01" font-size="8.96" fill="#333" stroke="#333" stroke-width="0.12" stroke-linejoin="round" font-weight="normal" text-anchor="start" textLength="42.69" lengthAdjust="spacingAndGlyphs" >Full License</text>
<path d="M279,590 L279,601" stroke="#ccc" stroke-width="0.8" stroke-dasharray="1,1"/>
<text x="283.00" y="599.01" font-size="8.96" fill="#333" stroke="#333" stroke-width="0.12" stroke-linejoin="round" font-weight="normal" text-anchor="start" textLength="46.69" lengthAdjust="spacingAndGlyphs" >Data Source:</text>
<rect x="332.4" y="589.8" width="140.4" height="11.6" fill="#fff" stroke="#aaa" stroke-width="0.8"/>
<text x="334.60" y="599.05" font-size="9.07" fill="#111" stroke="#111" stroke-width="0.12" stroke-linejoin="round" font-weight="normal" text-anchor="start" textLength="84.63" lengthAdjust="spacingAndGlyphs" >INCA Experiment (Live)</text>
<path d="M463.5,594.5 L467.5,594.5 L465.5,597 Z" fill="#222"/>
<circle cx="481" cy="595.8" r="2.8" fill="#222"/><circle cx="481" cy="595.8" r="1" fill="#fff"/>
<path d="M478,592.7 L484,598.9 M484,592.7 L478,598.9 M481,591.8 L481,599.8 M477,595.8 L485,595.8" stroke="#222" stroke-width="1.1"/>
<path d="M488,597 L493,592.5 L498,594.5 L493,599 Z" fill="#4a90d0"/>
<rect x="501.60" y="590.50" width="0.80" height="10.50" fill="#999" />
<rect x="507.0" y="592" width="7" height="7" fill="none" stroke="#aaa" stroke-width="0.8"/><path d="M508.5,594.5 L512.5,594.5 M508.5,596.5 L512.5,596.5" stroke="#aaa" stroke-width="0.7"/>
<rect x="520.0" y="592" width="7" height="7" fill="none" stroke="#aaa" stroke-width="0.8"/><path d="M521.5,594.5 L525.5,594.5 M521.5,596.5 L525.5,596.5" stroke="#aaa" stroke-width="0.7"/>
<rect x="533.0" y="592" width="7" height="7" fill="none" stroke="#aaa" stroke-width="0.8"/><path d="M534.5,594.5 L538.5,594.5 M534.5,596.5 L538.5,596.5" stroke="#aaa" stroke-width="0.7"/>
<path d="M546.5,592 L552,595.8 L546.5,599.6 Z" fill="#9a9a9a"/>
<rect x="558.50" y="592.50" width="7.00" height="6.70" fill="#e82424" />
<path d="M568.5,590 L568.5,601" stroke="#ccc" stroke-width="0.8" stroke-dasharray="1,1"/>
<rect x="973.00" y="590.00" width="9.00" height="11.50" fill="#d0e6f8" />
<path d="M957,590 L957,601" stroke="#ccc" stroke-width="0.8" stroke-dasharray="1,1"/>
<rect x="960.8" y="591.7" width="7.4" height="8" fill="#f4f0e0" stroke="#8a8a7a" stroke-width="0.8"/>
<rect x="973.8" y="591.7" width="7.4" height="8" fill="#f4f0e0" stroke="#8a8a7a" stroke-width="0.8"/>
<rect x="986.8" y="591.7" width="7.4" height="8" fill="#f4f0e0" stroke="#8a8a7a" stroke-width="0.8"/>
<path d="M977.5,591.7 L977.5,599.7" stroke="#8a8a7a" stroke-width="0.8"/>
<rect x="998.60" y="590.00" width="0.80" height="11.50" fill="#aaa" />
<rect x="1002.00" y="595.20" width="7.50" height="1.40" fill="#1f3f9a" />
<rect x="1015.00" y="595.20" width="7.00" height="1.40" fill="#1f3f9a" />
<rect x="1017.80" y="592.00" width="1.40" height="7.60" fill="#1f3f9a" />
<path d="M1028,592 L1035,592 L1032.2,595.5 L1032.2,599.5 L1030.8,599.5 L1030.8,595.5 Z" fill="none" stroke="#1f3f9a" stroke-width="0.9"/>
<path d="M1041,592 L1043.5,592 M1041,592 L1041,594.5 M1048,592 L1045.5,592 M1048,592 L1048,594.5 M1041,599.5 L1043.5,599.5 M1041,599.5 L1041,597 M1048,599.5 L1045.5,599.5 M1048,599.5 L1048,597 M1042,593 L1047,598.5 M1047,593 L1042,598.5" stroke="#1f3f9a" stroke-width="1.1" fill="none"/>
<rect x="403.00" y="103.00" width="648.50" height="18.00" fill="#ebebeb" />
<rect x="403.00" y="102.60" width="648.50" height="0.80" fill="#dadada" />
<rect x="403.00" y="120.20" width="648.50" height="0.80" fill="#d6d6d6" />
<rect x="403.00" y="103.00" width="136.30" height="18.20" fill="#ffffff" />
<rect x="403.00" y="103.00" width="136.30" height="2.00" fill="#234f9c" />
<rect x="539.00" y="103.00" width="0.80" height="18.00" fill="#d8d8d8" />
<circle cx="411.5" cy="109.7" r="1.8" fill="none" stroke="#2a6ab0" stroke-width="0.9"/><circle cx="410.3" cy="114.6" r="1.8" fill="none" stroke="#2a6ab0" stroke-width="0.9"/><path d="M407.5,112.1 L415,112.1 M412,114.6 L415.5,114.6" stroke="#2a6ab0" stroke-width="0.8"/>
<text x="417.50" y="114.93" font-size="9.30" fill="#23509e" font-weight="bold" text-anchor="start" textLength="109.78" lengthAdjust="spacingAndGlyphs" >FunctionOverviewDiagram1</text>
<path d="M530.8,109.8 L535.2,114.2 M535.2,109.8 L530.8,114.2" stroke="#111" stroke-width="1.3"/>
<rect x="1027.8" y="106.5" width="6" height="2.4" rx="1.2" fill="none" stroke="#999" stroke-width="0.8"/>
<rect x="1040" y="107.5" width="6" height="6" fill="none" stroke="#999" stroke-width="0.8"/><rect x="1040" y="107.5" width="6" height="1.6" fill="#999"/>
</g>
<g font-family='"Liberation Sans", sans-serif'>
<path d="M542,229.6 L714.5,229.6" fill="none" stroke="#5a5a5a" stroke-width="1.2"/>
<path d="M548,229.6 L548,515 Q548,517.5 550.5,517.5 L880,517.5 Q882.7,517.5 882.7,515 L882.7,400.5 Q882.7,398 885,398 L888.5,398" fill="none" stroke="#5a5a5a" stroke-width="1.2"/>
<path d="M548,393.9 L553.5,393.9" fill="none" stroke="#5a5a5a" stroke-width="1.2"/>
<path d="M709.8,229.6 L709.8,391.4 Q709.8,393.9 712.3,393.9 L715.5,393.9" fill="none" stroke="#5a5a5a" stroke-width="1.2"/>
<path d="M703,416.4 L715.5,416.4" fill="none" stroke="#5a5a5a" stroke-width="1.2"/>
<path d="M703,461.4 L706.5,461.4 Q709,461.4 709,464 L709,491.8 Q709,494.3 711.5,494.3 L874.7,494.3 Q877.2,494.3 877.2,491.8 L877.2,377.7 Q877.2,375.2 879.7,375.2 L888.5,375.2" fill="none" stroke="#5a5a5a" stroke-width="1.2"/>
<path d="M866,446 L868,446 Q870.5,446 870.5,443.5 L870.5,354.7 Q870.5,352.2 873,352.2 L888.5,352.2" fill="none" stroke="#5a5a5a" stroke-width="1.2"/>
<path d="M866,329.7 L888.5,329.8" fill="none" stroke="#5a5a5a" stroke-width="1.2"/>
<path d="M1039,386.6 L1042,386.6 Q1044.5,386.6 1044.5,384.1 L1044.5,192.5 Q1044.5,190 1042,190 L712.3,190 Q709.8,190 709.8,192.5 L709.8,204.8 Q709.8,207.3 712.3,207.3 L715,207.3" fill="none" stroke="#5a5a5a" stroke-width="1.2"/>
<path d="M546,229.6 L548,227.6 L550,229.6 L548,231.6 Z" fill="#111"/>
<path d="M707.8,229.6 L709.8,227.6 L711.8,229.6 L709.8,231.6 Z" fill="#111"/>
<path d="M546,393.9 L548,391.9 L550,393.9 L548,395.9 Z" fill="#111"/>
<rect x="409.5" y="218" width="115.5" height="29" fill="#b0d6ea" stroke="#4a4f52" stroke-width="1.1"/>
<rect x="404.50" y="214.40" width="11.6" height="9.2" rx="2.5" fill="#fff" stroke="#555" stroke-width="0.9"/>
<path d="M407.20,219.00 L413.40,219.00 M410.30,215.90 L410.30,222.10" stroke="#000" stroke-width="2"/>
<rect x="409.50" y="247.00" width="21.00" height="8.30" fill="#1a77bd" />
<text x="420.00" y="254.17" font-size="8.29" fill="#fff" stroke="#fff" stroke-width="0.03" stroke-linejoin="round" font-weight="normal" text-anchor="middle" textLength="16.86" lengthAdjust="spacingAndGlyphs" >OEM</text>
<text x="467.00" y="256.71" font-size="6.72" fill="#4a3fc8" stroke="#4a3fc8" stroke-width="0.12" stroke-linejoin="round" font-weight="normal" text-anchor="middle" textLength="12.34" lengthAdjust="spacingAndGlyphs" >Epm</text>
<path d="M525.00,223.60 L537.00,223.60 L543.20,229.60 L537.00,235.60 L525.00,235.60 Z" fill="#fff" stroke="#666" stroke-width="0.9"/>
<rect x="527.30" y="226.10" width="7.6" height="7.2" fill="url(#og)"/>
<text x="476.00" y="231.93" font-size="6.50" fill="#2222d8" stroke="#2222d8" stroke-width="0.12" stroke-linejoin="round" font-weight="normal" text-anchor="start" textLength="45.78" lengthAdjust="spacingAndGlyphs" >Epm_rpmEngSpd</text>
<text x="476.00" y="239.91" font-size="6.72" fill="#222" stroke="#222" stroke-width="0.14" stroke-linejoin="round" font-weight="normal" text-anchor="start" textLength="32.35" lengthAdjust="spacingAndGlyphs" >97.50 U/min</text>
<rect x="733" y="196" width="115" height="164" fill="#eab1c8" stroke="#4a4f52" stroke-width="1.1"/>
<rect x="728.00" y="192.40" width="11.6" height="9.2" rx="2.5" fill="#fff" stroke="#555" stroke-width="0.9"/>
<path d="M730.70,197.00 L736.90,197.00 M733.80,193.90 L733.80,200.10" stroke="#000" stroke-width="2"/>
<rect x="733.00" y="360.00" width="12.50" height="8.30" fill="#b8124c" />
<text x="739.25" y="366.93" font-size="7.62" fill="#fff" stroke="#fff" stroke-width="0.03" stroke-linejoin="round" font-weight="normal" text-anchor="middle" textLength="7.94" lengthAdjust="spacingAndGlyphs" >T1</text>
<text x="790.00" y="369.21" font-size="6.72" fill="#4a3fc8" stroke="#4a3fc8" stroke-width="0.12" stroke-linejoin="round" font-weight="normal" text-anchor="middle" textLength="6.33" lengthAdjust="spacingAndGlyphs" >Itc</text>
<path d="M714.80,201.30 L726.80,201.30 L733.00,207.30 L726.80,213.30 L714.80,213.30 Z" fill="#fff" stroke="#666" stroke-width="0.9"/>
<rect x="717.10" y="203.80" width="7.6" height="7.2" fill="url(#og)"/>
<text x="735.50" y="209.63" font-size="6.50" fill="#2222d8" stroke="#2222d8" stroke-width="0.12" stroke-linejoin="round" font-weight="normal" text-anchor="start" textLength="30.61" lengthAdjust="spacingAndGlyphs" >Fmc_mFuel</text>
<text x="735.50" y="217.61" font-size="6.72" fill="#222" stroke="#222" stroke-width="0.14" stroke-linejoin="round" font-weight="normal" text-anchor="start" textLength="38.69" lengthAdjust="spacingAndGlyphs" >0.00755 m/K/s</text>
<path d="M714.80,223.60 L726.80,223.60 L733.00,229.60 L726.80,235.60 L714.80,235.60 Z" fill="#fff" stroke="#666" stroke-width="0.9"/>
<rect x="717.10" y="226.10" width="7.6" height="7.2" fill="url(#og)"/>
<text x="735.50" y="231.93" font-size="6.50" fill="#2222d8" stroke="#2222d8" stroke-width="0.12" stroke-linejoin="round" font-weight="normal" text-anchor="start" textLength="45.78" lengthAdjust="spacingAndGlyphs" >Epm_rpmEngSpd</text>
<text x="735.50" y="239.91" font-size="6.72" fill="#222" stroke="#222" stroke-width="0.14" stroke-linejoin="round" font-weight="normal" text-anchor="start" textLength="32.35" lengthAdjust="spacingAndGlyphs" >97.50 U/min</text>
<path d="M714.80,246.40 L726.80,246.40 L733.00,252.40 L726.80,258.40 L714.80,258.40 Z" fill="#fff" stroke="#666" stroke-width="0.9"/>
<rect x="717.10" y="248.90" width="7.6" height="7.2" fill="url(#gg)"/>
<text x="735.50" y="254.73" font-size="6.50" fill="#2222d8" stroke="#2222d8" stroke-width="0.12" stroke-linejoin="round" font-weight="normal" text-anchor="start" textLength="41.90" lengthAdjust="spacingAndGlyphs" >Stc_facFuelCorr</text>
<text x="735.50" y="262.71" font-size="6.72" fill="#222" stroke="#222" stroke-width="0.14" stroke-linejoin="round" font-weight="normal" text-anchor="start" textLength="23.02" lengthAdjust="spacingAndGlyphs" >0.695 us</text>
<path d="M714.80,269.20 L726.80,269.20 L733.00,275.20 L726.80,281.20 L714.80,281.20 Z" fill="#fff" stroke="#666" stroke-width="0.9"/>
<rect x="717.10" y="271.70" width="7.6" height="7.2" fill="url(#gg)"/>
<text x="735.50" y="277.53" font-size="6.50" fill="#2222d8" stroke="#2222d8" stroke-width="0.12" stroke-linejoin="round" font-weight="normal" text-anchor="start" textLength="26.44" lengthAdjust="spacingAndGlyphs" >Bvc_uBatt</text>
<text x="735.50" y="285.51" font-size="6.72" fill="#222" stroke="#222" stroke-width="0.14" stroke-linejoin="round" font-weight="normal" text-anchor="start" textLength="29.68" lengthAdjust="spacingAndGlyphs" >0.486 g/km</text>
<path d="M714.80,291.80 L726.80,291.80 L733.00,297.80 L726.80,303.80 L714.80,303.80 Z" fill="#fff" stroke="#666" stroke-width="0.9"/>
<rect x="717.10" y="294.30" width="7.6" height="7.2" fill="url(#gg)"/>
<text x="735.50" y="300.13" font-size="6.50" fill="#2222d8" stroke="#2222d8" stroke-width="0.12" stroke-linejoin="round" font-weight="normal" text-anchor="start" textLength="37.71" lengthAdjust="spacingAndGlyphs" >Mpc_pManiFilt</text>
<text x="735.50" y="308.11" font-size="6.72" fill="#222" stroke="#222" stroke-width="0.14" stroke-linejoin="round" font-weight="normal" text-anchor="start" textLength="26.91" lengthAdjust="spacingAndGlyphs" >1180.00 V</text>
<path d="M714.80,314.60 L726.80,314.60 L733.00,320.60 L726.80,326.60 L714.80,326.60 Z" fill="#fff" stroke="#666" stroke-width="0.9"/>
<rect x="717.10" y="317.10" width="7.6" height="7.2" fill="url(#og)"/>
<text x="735.50" y="322.93" font-size="6.50" fill="#2222d8" stroke="#2222d8" stroke-width="0.12" stroke-linejoin="round" font-weight="normal" text-anchor="start" textLength="40.52" lengthAdjust="spacingAndGlyphs" >Iac_flgIgnCutoff</text>
<text x="735.50" y="330.91" font-size="6.72" fill="#222" stroke="#222" stroke-width="0.14" stroke-linejoin="round" font-weight="normal" text-anchor="start" textLength="28.69" lengthAdjust="spacingAndGlyphs" >39.00 grad</text>
<path d="M714.80,337.00 L726.80,337.00 L733.00,343.00 L726.80,349.00 L714.80,349.00 Z" fill="#fff" stroke="#666" stroke-width="0.9"/>
<rect x="717.10" y="339.50" width="7.6" height="7.2" fill="url(#og)"/>
<text x="735.50" y="345.33" font-size="6.50" fill="#2222d8" stroke="#2222d8" stroke-width="0.12" stroke-linejoin="round" font-weight="normal" text-anchor="start" textLength="43.42" lengthAdjust="spacingAndGlyphs" >Isc_flgFuelCutoff</text>
<text x="735.50" y="353.31" font-size="6.72" fill="#222" stroke="#222" stroke-width="0.14" stroke-linejoin="round" font-weight="normal" text-anchor="start" textLength="28.69" lengthAdjust="spacingAndGlyphs" >95.00 grad</text>
<path d="M848.00,214.60 L860.00,214.60 L866.20,220.60 L860.00,226.60 L848.00,226.60 Z" fill="#fff" stroke="#666" stroke-width="0.9"/>
<rect x="850.30" y="217.10" width="7.6" height="7.2" fill="url(#og)"/>
<text x="807.00" y="222.93" font-size="6.50" fill="#2222d8" stroke="#2222d8" stroke-width="0.12" stroke-linejoin="round" font-weight="normal" text-anchor="start" textLength="37.39" lengthAdjust="spacingAndGlyphs" >Itc_tiBattDelay</text>
<text x="807.00" y="230.91" font-size="6.72" fill="#222" stroke="#222" stroke-width="0.14" stroke-linejoin="round" font-weight="normal" text-anchor="start" textLength="32.03" lengthAdjust="spacingAndGlyphs" >695.00 grad</text>
<path d="M848.00,251.00 L860.00,251.00 L866.20,257.00 L860.00,263.00 L848.00,263.00 Z" fill="#fff" stroke="#666" stroke-width="0.9"/>
<rect x="850.30" y="253.50" width="7.6" height="7.2" fill="url(#og)"/>
<text x="825.40" y="259.33" font-size="6.50" fill="#2222d8" stroke="#2222d8" stroke-width="0.12" stroke-linejoin="round" font-weight="normal" text-anchor="start" textLength="18.37" lengthAdjust="spacingAndGlyphs" >Itc_tiInj</text>
<text x="825.40" y="267.31" font-size="6.72" fill="#222" stroke="#222" stroke-width="0.14" stroke-linejoin="round" font-weight="normal" text-anchor="start" textLength="32.03" lengthAdjust="spacingAndGlyphs" >895.00 grad</text>
<path d="M848.00,287.00 L860.00,287.00 L866.20,293.00 L860.00,299.00 L848.00,299.00 Z" fill="#fff" stroke="#666" stroke-width="0.9"/>
<rect x="850.30" y="289.50" width="7.6" height="7.2" fill="url(#og)"/>
<text x="806.00" y="295.33" font-size="6.50" fill="#2222d8" stroke="#2222d8" stroke-width="0.12" stroke-linejoin="round" font-weight="normal" text-anchor="start" textLength="36.97" lengthAdjust="spacingAndGlyphs" >Itc_flgInjCutoff</text>
<text x="806.00" y="303.31" font-size="6.72" fill="#222" stroke="#222" stroke-width="0.14" stroke-linejoin="round" font-weight="normal" text-anchor="start" textLength="32.03" lengthAdjust="spacingAndGlyphs" >127.00 grad</text>
<path d="M848.00,323.50 L860.00,323.50 L866.20,329.50 L860.00,335.50 L848.00,335.50 Z" fill="#fff" stroke="#666" stroke-width="0.9"/>
<rect x="850.30" y="326.00" width="7.6" height="7.2" fill="url(#og)"/>
<text x="809.00" y="331.83" font-size="6.50" fill="#2222d8" stroke="#2222d8" stroke-width="0.12" stroke-linejoin="round" font-weight="normal" text-anchor="start" textLength="33.74" lengthAdjust="spacingAndGlyphs" >Itc_tiInjOffset</text>
<text x="809.00" y="339.81" font-size="6.72" fill="#222" stroke="#222" stroke-width="0.14" stroke-linejoin="round" font-weight="normal" text-anchor="start" textLength="32.03" lengthAdjust="spacingAndGlyphs" >395.00 grad</text>
<rect x="571.5" y="382.7" width="114.70000000000005" height="118.10000000000002" fill="#b0d6ea" stroke="#4a4f52" stroke-width="1.1"/>
<rect x="566.50" y="379.10" width="11.6" height="9.2" rx="2.5" fill="#fff" stroke="#555" stroke-width="0.9"/>
<path d="M569.20,383.70 L575.40,383.70 M572.30,380.60 L572.30,386.80" stroke="#000" stroke-width="2"/>
<rect x="571.50" y="500.80" width="21.00" height="8.30" fill="#1a77bd" />
<text x="582.00" y="507.97" font-size="8.29" fill="#fff" stroke="#fff" stroke-width="0.03" stroke-linejoin="round" font-weight="normal" text-anchor="middle" textLength="16.86" lengthAdjust="spacingAndGlyphs" >OEM</text>
<text x="628.00" y="510.21" font-size="6.72" fill="#4a3fc8" stroke="#4a3fc8" stroke-width="0.12" stroke-linejoin="round" font-weight="normal" text-anchor="middle" textLength="10.67" lengthAdjust="spacingAndGlyphs" >Amf</text>
<path d="M553.30,387.90 L565.30,387.90 L571.50,393.90 L565.30,399.90 L553.30,399.90 Z" fill="#fff" stroke="#666" stroke-width="0.9"/>
<rect x="555.60" y="390.40" width="7.6" height="7.2" fill="url(#og)"/>
<text x="574.00" y="396.23" font-size="6.50" fill="#2222d8" stroke="#2222d8" stroke-width="0.12" stroke-linejoin="round" font-weight="normal" text-anchor="start" textLength="45.78" lengthAdjust="spacingAndGlyphs" >Epm_rpmEngSpd</text>
<text x="574.00" y="404.21" font-size="6.72" fill="#222" stroke="#222" stroke-width="0.14" stroke-linejoin="round" font-weight="normal" text-anchor="start" textLength="32.35" lengthAdjust="spacingAndGlyphs" >97.50 U/min</text>
<path d="M553.30,410.40 L565.30,410.40 L571.50,416.40 L565.30,422.40 L553.30,422.40 Z" fill="#fff" stroke="#666" stroke-width="0.9"/>
<rect x="555.60" y="412.90" width="7.6" height="7.2" fill="url(#gg)"/>
<text x="574.00" y="418.73" font-size="6.50" fill="#2222d8" stroke="#2222d8" stroke-width="0.12" stroke-linejoin="round" font-weight="normal" text-anchor="start" textLength="37.71" lengthAdjust="spacingAndGlyphs" >Mpc_pManiFilt</text>
<text x="574.00" y="426.71" font-size="6.72" fill="#222" stroke="#222" stroke-width="0.14" stroke-linejoin="round" font-weight="normal" text-anchor="start" textLength="26.91" lengthAdjust="spacingAndGlyphs" >1180.00 V</text>
<path d="M553.30,432.90 L565.30,432.90 L571.50,438.90 L565.30,444.90 L553.30,444.90 Z" fill="#fff" stroke="#666" stroke-width="0.9"/>
<rect x="555.60" y="435.40" width="7.6" height="7.2" fill="url(#gg)"/>
<text x="574.00" y="441.23" font-size="6.50" fill="#2222d8" stroke="#2222d8" stroke-width="0.12" stroke-linejoin="round" font-weight="normal" text-anchor="start" textLength="48.02" lengthAdjust="spacingAndGlyphs" >Amc_AirMassFlow</text>
<text x="574.00" y="449.21" font-size="6.72" fill="#222" stroke="#222" stroke-width="0.14" stroke-linejoin="round" font-weight="normal" text-anchor="start" textLength="26.68" lengthAdjust="spacingAndGlyphs" >7.77 Grad</text>
<path d="M553.30,455.40 L565.30,455.40 L571.50,461.40 L565.30,467.40 L553.30,467.40 Z" fill="#fff" stroke="#666" stroke-width="0.9"/>
<rect x="555.60" y="457.90" width="7.6" height="7.2" fill="url(#gg)"/>
<text x="574.00" y="463.73" font-size="6.50" fill="#2222d8" stroke="#2222d8" stroke-width="0.12" stroke-linejoin="round" font-weight="normal" text-anchor="start" textLength="29.98" lengthAdjust="spacingAndGlyphs" >Mtc_atMani</text>
<text x="574.00" y="471.71" font-size="6.72" fill="#222" stroke="#222" stroke-width="0.14" stroke-linejoin="round" font-weight="normal" text-anchor="start" textLength="30.02" lengthAdjust="spacingAndGlyphs" >0.742 Grad</text>
<path d="M553.30,478.50 L565.30,478.50 L571.50,484.50 L565.30,490.50 L553.30,490.50 Z" fill="#fff" stroke="#666" stroke-width="0.9"/>
<rect x="555.60" y="481.00" width="7.6" height="7.2" fill="url(#gg)"/>
<text x="574.00" y="486.83" font-size="6.50" fill="#2222d8" stroke="#2222d8" stroke-width="0.12" stroke-linejoin="round" font-weight="normal" text-anchor="start" textLength="28.69" lengthAdjust="spacingAndGlyphs" >Ctc_atCool</text>
<text x="574.00" y="494.81" font-size="6.72" fill="#222" stroke="#222" stroke-width="0.14" stroke-linejoin="round" font-weight="normal" text-anchor="start" textLength="26.68" lengthAdjust="spacingAndGlyphs" >6.21 Grad</text>
<path d="M686.20,410.40 L698.20,410.40 L704.40,416.40 L698.20,422.40 L686.20,422.40 Z" fill="#fff" stroke="#666" stroke-width="0.9"/>
<rect x="688.50" y="412.90" width="7.6" height="7.2" fill="url(#og)"/>
<text x="646.00" y="418.73" font-size="6.50" fill="#2222d8" stroke="#2222d8" stroke-width="0.12" stroke-linejoin="round" font-weight="normal" text-anchor="start" textLength="37.07" lengthAdjust="spacingAndGlyphs" >Amf_facRelAir</text>
<text x="646.00" y="426.71" font-size="6.72" fill="#222" stroke="#222" stroke-width="0.14" stroke-linejoin="round" font-weight="normal" text-anchor="start" textLength="23.68" lengthAdjust="spacingAndGlyphs" >1.16 rpm</text>
<path d="M686.20,455.40 L698.20,455.40 L704.40,461.40 L698.20,467.40 L686.20,467.40 Z" fill="#fff" stroke="#666" stroke-width="0.9"/>
<rect x="688.50" y="457.90" width="7.6" height="7.2" fill="url(#og)"/>
<text x="640.50" y="463.73" font-size="6.50" fill="#2222d8" stroke="#2222d8" stroke-width="0.12" stroke-linejoin="round" font-weight="normal" text-anchor="start" textLength="41.89" lengthAdjust="spacingAndGlyphs" >Amf_mAirPerStr</text>
<text x="640.50" y="471.71" font-size="6.72" fill="#222" stroke="#222" stroke-width="0.14" stroke-linejoin="round" font-weight="normal" text-anchor="start" textLength="38.69" lengthAdjust="spacingAndGlyphs" >0.00298 m/K/s</text>
<rect x="733.5" y="382.7" width="114.5" height="95.60000000000002" fill="#b0d6ea" stroke="#4a4f52" stroke-width="1.1"/>
<rect x="728.50" y="379.10" width="11.6" height="9.2" rx="2.5" fill="#fff" stroke="#555" stroke-width="0.9"/>
<path d="M731.20,383.70 L737.40,383.70 M734.30,380.60 L734.30,386.80" stroke="#000" stroke-width="2"/>
<rect x="733.50" y="478.30" width="21.00" height="8.30" fill="#1a77bd" />
<text x="744.00" y="485.47" font-size="8.29" fill="#fff" stroke="#fff" stroke-width="0.03" stroke-linejoin="round" font-weight="normal" text-anchor="middle" textLength="16.86" lengthAdjust="spacingAndGlyphs" >OEM</text>
<text x="790.00" y="488.21" font-size="6.72" fill="#4a3fc8" stroke="#4a3fc8" stroke-width="0.12" stroke-linejoin="round" font-weight="normal" text-anchor="middle" textLength="7.67" lengthAdjust="spacingAndGlyphs" >Afr</text>
<path d="M715.30,387.90 L727.30,387.90 L733.50,393.90 L727.30,399.90 L715.30,399.90 Z" fill="#fff" stroke="#666" stroke-width="0.9"/>
<rect x="717.60" y="390.40" width="7.6" height="7.2" fill="url(#og)"/>
<text x="736.00" y="396.23" font-size="6.50" fill="#2222d8" stroke="#2222d8" stroke-width="0.12" stroke-linejoin="round" font-weight="normal" text-anchor="start" textLength="45.78" lengthAdjust="spacingAndGlyphs" >Epm_rpmEngSpd</text>
<text x="736.00" y="404.21" font-size="6.72" fill="#222" stroke="#222" stroke-width="0.14" stroke-linejoin="round" font-weight="normal" text-anchor="start" textLength="32.35" lengthAdjust="spacingAndGlyphs" >97.50 U/min</text>
<path d="M715.30,410.40 L727.30,410.40 L733.50,416.40 L727.30,422.40 L715.30,422.40 Z" fill="#fff" stroke="#666" stroke-width="0.9"/>
<rect x="717.60" y="412.90" width="7.6" height="7.2" fill="url(#og)"/>
<text x="736.00" y="418.73" font-size="6.50" fill="#2222d8" stroke="#2222d8" stroke-width="0.12" stroke-linejoin="round" font-weight="normal" text-anchor="start" textLength="37.07" lengthAdjust="spacingAndGlyphs" >Amf_facRelAir</text>
<text x="736.00" y="426.71" font-size="6.72" fill="#222" stroke="#222" stroke-width="0.14" stroke-linejoin="round" font-weight="normal" text-anchor="start" textLength="23.68" lengthAdjust="spacingAndGlyphs" >1.16 rpm</text>
<path d="M715.30,432.90 L727.30,432.90 L733.50,438.90 L727.30,444.90 L715.30,444.90 Z" fill="#fff" stroke="#666" stroke-width="0.9"/>
<rect x="717.60" y="435.40" width="7.6" height="7.2" fill="url(#gg)"/>
<text x="736.00" y="441.23" font-size="6.50" fill="#2222d8" stroke="#2222d8" stroke-width="0.12" stroke-linejoin="round" font-weight="normal" text-anchor="start" textLength="29.98" lengthAdjust="spacingAndGlyphs" >Mtc_atMani</text>
<text x="736.00" y="449.21" font-size="6.72" fill="#222" stroke="#222" stroke-width="0.14" stroke-linejoin="round" font-weight="normal" text-anchor="start" textLength="30.02" lengthAdjust="spacingAndGlyphs" >0.742 Grad</text>
<path d="M715.30,455.40 L727.30,455.40 L733.50,461.40 L727.30,467.40 L715.30,467.40 Z" fill="#fff" stroke="#666" stroke-width="0.9"/>
<rect x="717.60" y="457.90" width="7.6" height="7.2" fill="url(#gg)"/>
<text x="736.00" y="463.73" font-size="6.50" fill="#2222d8" stroke="#2222d8" stroke-width="0.12" stroke-linejoin="round" font-weight="normal" text-anchor="start" textLength="28.69" lengthAdjust="spacingAndGlyphs" >Ctc_atCool</text>
<text x="736.00" y="471.71" font-size="6.72" fill="#222" stroke="#222" stroke-width="0.14" stroke-linejoin="round" font-weight="normal" text-anchor="start" textLength="26.68" lengthAdjust="spacingAndGlyphs" >6.21 Grad</text>
<path d="M848.00,402.80 L860.00,402.80 L866.20,408.80 L860.00,414.80 L848.00,414.80 Z" fill="#fff" stroke="#666" stroke-width="0.9"/>
<rect x="850.30" y="405.30" width="7.6" height="7.2" fill="url(#gg)"/>
<text x="795.00" y="411.13" font-size="6.50" fill="#2222d8" stroke="#2222d8" stroke-width="0.12" stroke-linejoin="round" font-weight="normal" text-anchor="start" textLength="49.97" lengthAdjust="spacingAndGlyphs" >Afr_facLambdaReq</text>
<text x="795.00" y="419.11" font-size="6.72" fill="#222" stroke="#222" stroke-width="0.14" stroke-linejoin="round" font-weight="normal" text-anchor="start" textLength="29.68" lengthAdjust="spacingAndGlyphs" >0.291 g/km</text>
<path d="M848.00,440.00 L860.00,440.00 L866.20,446.00 L860.00,452.00 L848.00,452.00 Z" fill="#fff" stroke="#666" stroke-width="0.9"/>
<rect x="850.30" y="442.50" width="7.6" height="7.2" fill="url(#og)"/>
<text x="812.00" y="448.33" font-size="6.50" fill="#2222d8" stroke="#2222d8" stroke-width="0.12" stroke-linejoin="round" font-weight="normal" text-anchor="start" textLength="31.91" lengthAdjust="spacingAndGlyphs" >Afr_facRatio</text>
<text x="812.00" y="456.31" font-size="6.72" fill="#222" stroke="#222" stroke-width="0.14" stroke-linejoin="round" font-weight="normal" text-anchor="start" textLength="29.68" lengthAdjust="spacingAndGlyphs" >0.193 g/km</text>
<rect x="906.5" y="318.3" width="114.5" height="141.5" fill="#eab1c8" stroke="#4a4f52" stroke-width="1.1"/>
<rect x="901.50" y="314.70" width="11.6" height="9.2" rx="2.5" fill="#fff" stroke="#555" stroke-width="0.9"/>
<path d="M904.20,319.30 L910.40,319.30 M907.30,316.20 L907.30,322.40" stroke="#000" stroke-width="2"/>
<rect x="906.50" y="459.80" width="12.50" height="8.30" fill="#b8124c" />
<text x="912.75" y="466.73" font-size="7.62" fill="#fff" stroke="#fff" stroke-width="0.03" stroke-linejoin="round" font-weight="normal" text-anchor="middle" textLength="7.94" lengthAdjust="spacingAndGlyphs" >T1</text>
<text x="963.00" y="469.21" font-size="6.72" fill="#4a3fc8" stroke="#4a3fc8" stroke-width="0.12" stroke-linejoin="round" font-weight="normal" text-anchor="middle" textLength="11.66" lengthAdjust="spacingAndGlyphs" >Fmc</text>
<path d="M888.30,324.00 L900.30,324.00 L906.50,330.00 L900.30,336.00 L888.30,336.00 Z" fill="#fff" stroke="#666" stroke-width="0.9"/>
<rect x="890.60" y="326.50" width="7.6" height="7.2" fill="url(#og)"/>
<text x="909.00" y="332.33" font-size="6.50" fill="#2222d8" stroke="#2222d8" stroke-width="0.12" stroke-linejoin="round" font-weight="normal" text-anchor="start" textLength="33.74" lengthAdjust="spacingAndGlyphs" >Itc_tiInjOffset</text>
<text x="909.00" y="340.31" font-size="6.72" fill="#222" stroke="#222" stroke-width="0.14" stroke-linejoin="round" font-weight="normal" text-anchor="start" textLength="32.03" lengthAdjust="spacingAndGlyphs" >395.00 grad</text>
<path d="M888.30,346.20 L900.30,346.20 L906.50,352.20 L900.30,358.20 L888.30,358.20 Z" fill="#fff" stroke="#666" stroke-width="0.9"/>
<rect x="890.60" y="348.70" width="7.6" height="7.2" fill="url(#og)"/>
<text x="909.00" y="354.53" font-size="6.50" fill="#2222d8" stroke="#2222d8" stroke-width="0.12" stroke-linejoin="round" font-weight="normal" text-anchor="start" textLength="31.91" lengthAdjust="spacingAndGlyphs" >Afr_facRatio</text>
<text x="909.00" y="362.51" font-size="6.72" fill="#222" stroke="#222" stroke-width="0.14" stroke-linejoin="round" font-weight="normal" text-anchor="start" textLength="29.68" lengthAdjust="spacingAndGlyphs" >0.193 g/km</text>
<path d="M888.30,369.20 L900.30,369.20 L906.50,375.20 L900.30,381.20 L888.30,381.20 Z" fill="#fff" stroke="#666" stroke-width="0.9"/>
<rect x="890.60" y="371.70" width="7.6" height="7.2" fill="url(#og)"/>
<text x="909.00" y="377.53" font-size="6.50" fill="#2222d8" stroke="#2222d8" stroke-width="0.12" stroke-linejoin="round" font-weight="normal" text-anchor="start" textLength="41.89" lengthAdjust="spacingAndGlyphs" >Amf_mAirPerStr</text>
<text x="909.00" y="385.51" font-size="6.72" fill="#222" stroke="#222" stroke-width="0.14" stroke-linejoin="round" font-weight="normal" text-anchor="start" textLength="38.69" lengthAdjust="spacingAndGlyphs" >0.00298 m/K/s</text>
<path d="M888.30,392.00 L900.30,392.00 L906.50,398.00 L900.30,404.00 L888.30,404.00 Z" fill="#fff" stroke="#666" stroke-width="0.9"/>
<rect x="890.60" y="394.50" width="7.6" height="7.2" fill="url(#og)"/>
<text x="909.00" y="400.33" font-size="6.50" fill="#2222d8" stroke="#2222d8" stroke-width="0.12" stroke-linejoin="round" font-weight="normal" text-anchor="start" textLength="45.78" lengthAdjust="spacingAndGlyphs" >Epm_rpmEngSpd</text>
<text x="909.00" y="408.31" font-size="6.72" fill="#222" stroke="#222" stroke-width="0.14" stroke-linejoin="round" font-weight="normal" text-anchor="start" textLength="32.35" lengthAdjust="spacingAndGlyphs" >97.50 U/min</text>
<path d="M888.30,414.60 L900.30,414.60 L906.50,420.60 L900.30,426.60 L888.30,426.60 Z" fill="#fff" stroke="#666" stroke-width="0.9"/>
<rect x="890.60" y="417.10" width="7.6" height="7.2" fill="url(#gg)"/>
<text x="909.00" y="422.93" font-size="6.50" fill="#2222d8" stroke="#2222d8" stroke-width="0.12" stroke-linejoin="round" font-weight="normal" text-anchor="start" textLength="28.37" lengthAdjust="spacingAndGlyphs" >Tqs_tqReq</text>
<text x="909.00" y="430.91" font-size="6.72" fill="#222" stroke="#222" stroke-width="0.14" stroke-linejoin="round" font-weight="normal" text-anchor="start" textLength="26.68" lengthAdjust="spacingAndGlyphs" >3.87 Grad</text>
<path d="M888.30,436.80 L900.30,436.80 L906.50,442.80 L900.30,448.80 L888.30,448.80 Z" fill="#fff" stroke="#666" stroke-width="0.9"/>
<rect x="890.60" y="439.30" width="7.6" height="7.2" fill="url(#gg)"/>
<text x="909.00" y="445.13" font-size="6.50" fill="#2222d8" stroke="#2222d8" stroke-width="0.12" stroke-linejoin="round" font-weight="normal" text-anchor="start" textLength="52.23" lengthAdjust="spacingAndGlyphs" >Lcc_facLambdaCorr</text>
<text x="909.00" y="453.11" font-size="6.72" fill="#222" stroke="#222" stroke-width="0.14" stroke-linejoin="round" font-weight="normal" text-anchor="start" textLength="29.68" lengthAdjust="spacingAndGlyphs" >0.388 g/km</text>
<path d="M1021.00,380.60 L1033.00,380.60 L1039.20,386.60 L1033.00,392.60 L1021.00,392.60 Z" fill="#fff" stroke="#666" stroke-width="0.9"/>
<rect x="1023.30" y="383.10" width="7.6" height="7.2" fill="url(#og)"/>
<text x="988.00" y="388.93" font-size="6.50" fill="#2222d8" stroke="#2222d8" stroke-width="0.12" stroke-linejoin="round" font-weight="normal" text-anchor="start" textLength="30.61" lengthAdjust="spacingAndGlyphs" >Fmc_mFuel</text>
<text x="988.00" y="396.91" font-size="6.72" fill="#222" stroke="#222" stroke-width="0.14" stroke-linejoin="round" font-weight="normal" text-anchor="start" textLength="38.69" lengthAdjust="spacingAndGlyphs" >0.00755 m/K/s</text>
</g>
</svg></body></html>
